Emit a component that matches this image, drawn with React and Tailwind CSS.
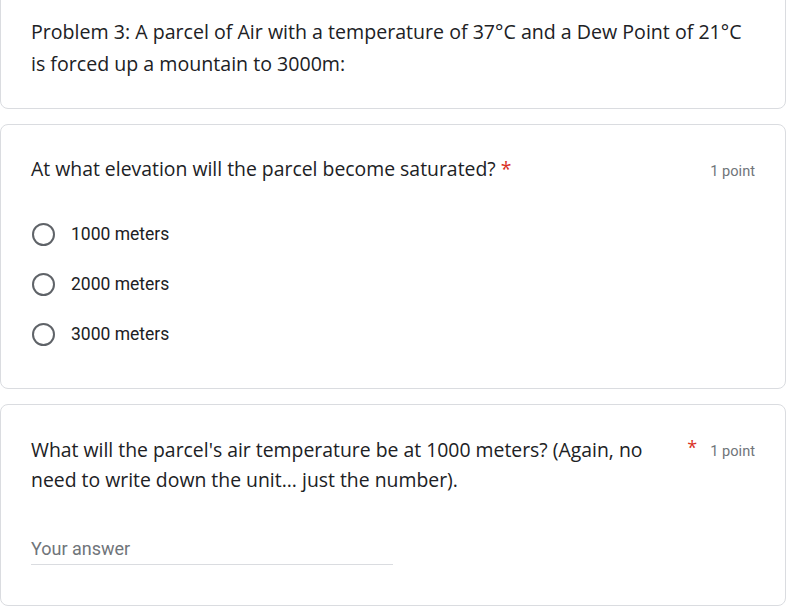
import React from 'react';

const Radio = ({label}) => (
  <div className="flex items-center h-[50px]">
    <div className="w-[23px] h-[23px] rounded-full border-2 border-[#5f6368] ml-[1px]" />
    <span className="ml-[16px] text-[17.5px] text-[#202124]">{label}</span>
  </div>
);

const App = () => {
  return (
    <div className="w-[787px] h-[606px] overflow-hidden bg-white font-['Roboto',sans-serif]">
      {/* Section header card */}
      <div className="-mt-[10px] w-[786px] border border-[#dadce0] rounded-lg bg-white pl-[30px] pr-6 pt-[25px] pb-[28px]">
        <h2 className="max-w-[725px] text-[19.6px] leading-[32px] text-[#202124] font-['Open_Sans',sans-serif]">
          Problem 3: A parcel of Air with a temperature of 37°C and a Dew Point of 21°C is forced up a mountain to 3000m:
        </h2>
      </div>

      {/* Multiple choice question */}
      <div className="mt-[15px] w-[786px] h-[265px] border border-[#dadce0] rounded-lg bg-white pl-[30px] pr-[30px] pt-[32px]">
        <div className="flex justify-between items-start">
          <div className="text-[19.4px] leading-[24px] text-[#202124] font-['Open_Sans',sans-serif]">
            At what elevation will the parcel become saturated? <span className="text-[#d93025]">*</span>
          </div>
          <div className="text-[14.6px] leading-[24px] text-[#70757a] pt-[2px]">1 point</div>
        </div>
        <div className="mt-[26px] flex flex-col">
          <Radio label="1000 meters" />
          <Radio label="2000 meters" />
          <Radio label="3000 meters" />
        </div>
      </div>

      {/* Short answer question */}
      <div className="mt-[15px] w-[786px] h-[202px] border border-[#dadce0] rounded-lg bg-white pl-[30px] pr-[30px] pt-[30px]">
        <div className="flex justify-between items-start">
          <div className="w-[640px] text-[19.4px] leading-[30px] text-[#202124] font-['Open_Sans',sans-serif]">
            What will the parcel's air temperature be at 1000 meters? (Again, no need to write down the unit... just the number).
          </div>
          <div className="flex items-start">
            <span className="text-[18px] leading-[24px] text-[#d93025] mr-[13px] font-['Open_Sans',sans-serif]">*</span>
            <span className="text-[14.6px] leading-[24px] text-[#70757a] pt-[4px]">1 point</span>
          </div>
        </div>
        <div className="mt-[42px] w-[362px] border-b border-[#dadce0] pb-[2px]">
          <span className="text-[18px] leading-[24px] text-[#70757a]">Your answer</span>
        </div>
      </div>
    </div>
  );
};

export default App;
